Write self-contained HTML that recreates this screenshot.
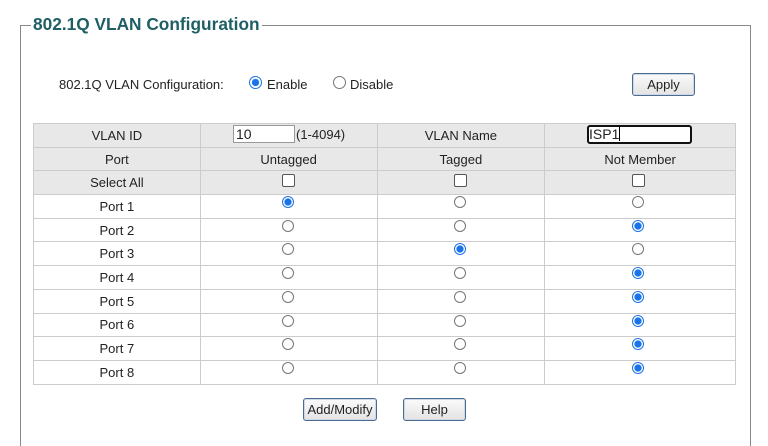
<!DOCTYPE html>
<html><head><style>
body{margin:0;width:768px;height:434px;background:#fff;font-family:"Liberation Sans",Arial,sans-serif;font-size:13px;color:#222;position:relative;overflow:hidden}
.fs{position:absolute;left:20px;top:25px;width:729px;height:420px;border:1px solid #888;border-bottom:none}
.lg{position:absolute;left:31px;top:14px;background:#fff;padding:0 2px;font-size:17.3px;font-weight:bold;color:#1e5f66}
.a{position:absolute}
.rb{display:inline-block;width:12px;height:12px;border:1px solid #767676;border-radius:50%;background:#fff;box-sizing:border-box;position:absolute}
.rb.on{border:1px solid #1a73e8;background:radial-gradient(circle,#1a73e8 0 3.3px,#fff 3.9px)}
.cb{position:absolute;width:13px;height:13px;border:1px solid #555;border-radius:2px;box-sizing:border-box;background:#fff}
.btn{position:absolute;border:1px solid #4a6b92;border-radius:3px;background:linear-gradient(#fbfbfb,#e3e3e3);font-size:13px;text-align:center;box-sizing:border-box;box-shadow:inset 0 0 0 1px #cfd8e4}
table{position:absolute;left:33px;top:123px;border-collapse:collapse;width:703px}
td{border:1px solid #ccc;height:22.7px;padding:0;text-align:center;position:relative;font-size:13px;line-height:15px}
tr.g td{background:#e8e8e8}
</style></head><body>
<div class="fs"></div>
<div class="lg">802.1Q VLAN Configuration</div>
<div class="a" style="left:59px;top:77px">802.1Q VLAN Configuration:</div>
<span class="rb on" style="left:249px;top:76px;width:13px;height:13px"></span>
<div class="a" style="left:267px;top:77px">Enable</div>
<span class="rb" style="left:333px;top:76px;width:13px;height:13px"></span>
<div class="a" style="left:350px;top:77px">Disable</div>
<div class="btn" style="left:632px;top:73px;width:63px;height:23px;line-height:21px">Apply</div>
<table>
<colgroup><col style="width:167px"><col style="width:177px"><col style="width:168px"><col style="width:191px"></colgroup>
<tr class="g"><td>VLAN ID</td><td></td><td>VLAN Name</td><td></td></tr>
<tr class="g"><td>Port</td><td>Untagged</td><td>Tagged</td><td>Not Member</td></tr>
<tr class="g"><td>Select All</td><td></td><td></td><td></td></tr>
<tr><td>Port 1</td><td></td><td></td><td></td></tr>
<tr><td>Port 2</td><td></td><td></td><td></td></tr>
<tr><td>Port 3</td><td></td><td></td><td></td></tr>
<tr><td>Port 4</td><td></td><td></td><td></td></tr>
<tr><td>Port 5</td><td></td><td></td><td></td></tr>
<tr><td>Port 6</td><td></td><td></td><td></td></tr>
<tr><td>Port 7</td><td></td><td></td><td></td></tr>
<tr><td>Port 8</td><td></td><td></td><td></td></tr>
</table>
<div class="a" style="left:233px;top:125px;width:62px;height:18px;border:1px solid #999;background:#fff;box-sizing:border-box;font-size:14px;line-height:16px;padding-left:2px">10</div>
<div class="a" style="left:296px;top:127px">(1-4094)</div>
<div class="a" style="left:587px;top:125px;width:105px;height:19px;border:2px solid #111;border-radius:3px;background:#fff;box-sizing:border-box;font-size:14px;line-height:15px;padding-left:0">ISP1<span style="display:inline-block;width:1px;height:14px;background:#000;vertical-align:-2px"></span></div>
<div class="cb" style="left:282px;top:174px"></div>
<div class="cb" style="left:454px;top:174px"></div>
<div class="cb" style="left:632px;top:174px"></div>
<div id="r"></div>
<script>
var sel=[0,2,1,2,2,2,2,2],xs=[282,454,632],h='';
for(var i=0;i<8;i++){var y=196+i*23.7;for(var c=0;c<3;c++){h+='<span class="rb'+(sel[i]==c?' on':'')+'" style="left:'+xs[c]+'px;top:'+y.toFixed(1)+'px"></span>';}}
document.getElementById('r').innerHTML=h;
</script>
<div class="btn" style="left:303px;top:398px;width:74px;height:23px;line-height:21px">Add/Modify</div>
<div class="btn" style="left:403px;top:398px;width:63px;height:23px;line-height:21px">Help</div>
</body></html>
